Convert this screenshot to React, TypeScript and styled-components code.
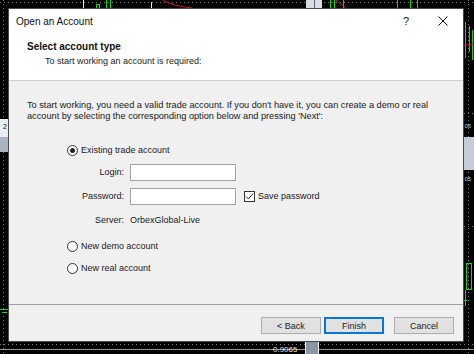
import { FC } from "react";
import styled, { createGlobalStyle } from "styled-components";

const GlobalStyle = createGlobalStyle`
  html, body {
    margin: 0;
    padding: 0;
    background: #000;
  }
  body {
    font-family: "Liberation Sans", Arial, sans-serif;
  }
`;

const ChartBackdrop: FC = () => (
  <ChartSvg width={474} height={354} viewBox="0 0 474 354">
    <rect width="474" height="354" fill="#000" />
    <g stroke="#808080" strokeWidth="1" strokeDasharray="1 3">
      <line x1="3.5" y1="0" x2="3.5" y2="354" />
      <line x1="468.5" y1="0" x2="468.5" y2="354" />
      <line x1="0" y1="2.5" x2="474" y2="2.5" />
      <line x1="0" y1="344.5" x2="474" y2="344.5" />
      <line x1="464" y1="113.5" x2="474" y2="113.5" />
      <line x1="464" y1="226.5" x2="474" y2="226.5" />
    </g>
    <line x1="0" y1="349.5" x2="474" y2="349.5" stroke="#9a9a9a" />

    {/* candles along the top edge */}
    <g stroke="#19d419" strokeWidth="1" fill="none">
      <line x1="106.5" y1="0" x2="106.5" y2="8" />
      <line x1="110.5" y1="0" x2="110.5" y2="8" />
      <rect x="96.5" y="4.5" width="3" height="4" />
      <line x1="330.5" y1="0" x2="330.5" y2="8" />
      <line x1="334.5" y1="0" x2="334.5" y2="8" />
      <line x1="343.5" y1="0" x2="343.5" y2="8" />
      <line x1="397.5" y1="0" x2="397.5" y2="8" />
      <line x1="410.5" y1="0" x2="410.5" y2="8" />
      <line x1="417.5" y1="0" x2="417.5" y2="8" />
    </g>
    <g stroke="#e8e8e8" strokeWidth="1">
      <line x1="83.5" y1="0" x2="83.5" y2="8" />
      <line x1="151.5" y1="2" x2="151.5" y2="8" />
    </g>
    <rect x="306" y="0" width="16" height="8" fill="#d9dee6" />
    <line x1="314.5" y1="0" x2="314.5" y2="8" stroke="#5a6270" />
    <path d="M163 0 Q172 6 192 8" stroke="#d01818" fill="none" />
    <path d="M336 0 Q340 4 346 8" stroke="#d01818" fill="none" />

    {/* right edge */}
    <g stroke="#19d419" strokeWidth="1" fill="none">
      <line x1="465.5" y1="22" x2="465.5" y2="58" />
      <line x1="469.5" y1="26" x2="469.5" y2="52" />
      <line x1="472.5" y1="30" x2="472.5" y2="60" />
      <rect x="466.5" y="263.5" width="5" height="26" />
      <line x1="464" y1="300.5" x2="467" y2="300.5" />
      <line x1="465.5" y1="290" x2="465.5" y2="306" />
    </g>
    <line x1="464" y1="45.5" x2="474" y2="44" stroke="#d01818" />
    <text x="464.5" y="128" fill="#d0d0d0" fontSize="6" fontFamily="Liberation Sans, Arial, sans-serif">
      06
    </text>
    <rect x="464" y="137" width="10" height="33" fill="#c3ccd8" />
    <text x="464.5" y="181" fill="#d0d0d0" fontSize="6" fontFamily="Liberation Sans, Arial, sans-serif">
      05
    </text>

    {/* left edge */}
    <rect x="0" y="119" width="8" height="18" fill="#e9edf2" />
    <text x="3" y="129" fill="#111" fontSize="7" fontFamily="Liberation Sans, Arial, sans-serif">
      2
    </text>
    <rect x="0" y="137" width="8" height="15" fill="#a9b4c2" />
    <g stroke="#19d419">
      <line x1="0" y1="309.5" x2="8" y2="309.5" />
      <line x1="2" y1="312.5" x2="7" y2="312.5" />
    </g>

    {/* bottom edge */}
    <text x="273" y="352" fill="#e0e0e0" fontSize="8" fontFamily="Liberation Sans, Arial, sans-serif">
      0.9065
    </text>
    <rect x="306" y="342" width="13" height="12" fill="#8d96a4" />
    <line x1="305.5" y1="342" x2="305.5" y2="354" stroke="#f0f0f0" />
    <line x1="318.5" y1="342" x2="318.5" y2="354" stroke="#f0f0f0" />
  </ChartSvg>
);

interface RadioOptionProps {
  label: string;
  checked?: boolean;
  spacing: number;
}

const RadioOption: FC<RadioOptionProps> = ({ label, checked, spacing }) => (
  <RadioRow $spacing={spacing}>
    <RadioCircle>{checked && <RadioDot />}</RadioCircle>
    <OptionText>{label}</OptionText>
  </RadioRow>
);

const App: FC = () => (
  <>
    <GlobalStyle />
    <Desktop>
      <ChartBackdrop />
      <Dialog>
        <Header>
          <TitleBar>
            <TitleText>Open an Account</TitleText>
            <HelpButton>?</HelpButton>
            <CloseButton>
              <svg width="10" height="10" viewBox="0 0 10 10">
                <path d="M0.5 0.5 L9.5 9.5 M9.5 0.5 L0.5 9.5" stroke="#111" strokeWidth="1" />
              </svg>
            </CloseButton>
          </TitleBar>
          <Heading>Select account type</Heading>
          <SubHeading>To start working an account is required:</SubHeading>
        </Header>

        <Body>
          <Intro>
            To start working, you need a valid trade account. If you don't have it, you can create a demo or real
            <br />
            account by selecting the corresponding option below and pressing 'Next':
          </Intro>

          <RadioOption label="Existing trade account" checked spacing={22} />

          <FormGrid>
            <FieldLabel>Login:</FieldLabel>
            <TextBox />
            <span />
            <FieldLabel>Password:</FieldLabel>
            <TextBox type="password" />
            <CheckRow>
              <CheckBox>
                <svg width="9" height="9" viewBox="0 0 9 9">
                  <path d="M1 4.5 L3.5 7 L8 1.5" stroke="#222" strokeWidth="1" fill="none" />
                </svg>
              </CheckBox>
              <OptionText>Save password</OptionText>
            </CheckRow>
            <FieldLabel>Server:</FieldLabel>
            <FieldValue>OrbexGlobal-Live</FieldValue>
            <span />
          </FormGrid>

          <RadioOption label="New demo account" spacing={11} />
          <RadioOption label="New real account" spacing={9} />
        </Body>

        <Footer>
          <WizardButton>&lt; Back</WizardButton>
          <WizardButton $primary>Finish</WizardButton>
          <WizardButton>Cancel</WizardButton>
        </Footer>
      </Dialog>
    </Desktop>
  </>
);

export default App;

const Desktop = styled.div`
  position: relative;
  width: 474px;
  height: 354px;
  overflow: hidden;
  background: #000;
`;

const ChartSvg = styled.svg`
  position: absolute;
  inset: 0;
  display: block;
`;

const Dialog = styled.div`
  position: absolute;
  left: 8px;
  top: 8px;
  width: 456px;
  height: 334px;
  box-sizing: border-box;
  border: 1px solid #4a4a4a;
  background: #f0f0f0;
  display: flex;
  flex-direction: column;
  color: #1a1a1a;
`;

const Header = styled.div`
  height: 72px;
  box-sizing: border-box;
  background: #fff;
  border-bottom: 1px solid #cfcfcf;
  display: flex;
  flex-direction: column;
`;

const TitleBar = styled.div`
  height: 24px;
  display: flex;
  align-items: center;
  gap: 12px;
  padding: 0 5px 0 7px;
`;

const TitleText = styled.div`
  flex: 1;
  font-size: 10px;
  color: #111;
`;

const HelpButton = styled.div`
  width: 20px;
  text-align: center;
  font-size: 11px;
  color: #222;
`;

const CloseButton = styled.div`
  width: 30px;
  display: flex;
  justify-content: center;
  align-items: center;
`;

const Heading = styled.div`
  margin: 8px 0 0 18px;
  font-size: 10px;
  line-height: 12px;
  font-weight: bold;
  color: #111;
`;

const SubHeading = styled.div`
  margin: 3px 0 0 36px;
  font-size: 9px;
  line-height: 11px;
`;

const Body = styled.div`
  flex: 1;
  padding: 19px 0 0 18px;
  display: flex;
  flex-direction: column;
  font-size: 9px;
  line-height: 11px;
`;

const Intro = styled.div`
  white-space: nowrap;
  font-size: 9.2px;
`;

const RadioRow = styled.div<{ $spacing: number }>`
  margin: ${({ $spacing }) => $spacing}px 0 0 40px;
  height: 13px;
  display: flex;
  align-items: center;
  gap: 3px;
`;

const RadioCircle = styled.span`
  width: 11px;
  height: 11px;
  box-sizing: border-box;
  border: 1px solid #333;
  border-radius: 50%;
  background: #fff;
  display: flex;
  align-items: center;
  justify-content: center;
`;

const RadioDot = styled.span`
  width: 5px;
  height: 5px;
  border-radius: 50%;
  background: #222;
`;

const OptionText = styled.span`
  font-size: 9px;
  line-height: 11px;
`;

const FormGrid = styled.div`
  margin-top: 7px;
  display: grid;
  grid-template-columns: 97px 106px auto;
  grid-auto-rows: 17px;
  row-gap: 7px;
  column-gap: 6px;
  align-items: center;
`;

const FieldLabel = styled.span`
  text-align: right;
`;

const FieldValue = styled.span``;

const TextBox = styled.input`
  width: 106px;
  height: 17px;
  box-sizing: border-box;
  border: 1px solid #a3a3a3;
  background: #fff;
  margin: 0;
  padding: 0 3px;
  font: inherit;
  outline: none;
`;

const CheckRow = styled.div`
  margin-left: 2px;
  display: flex;
  align-items: center;
  gap: 3px;
`;

const CheckBox = styled.span`
  width: 11px;
  height: 11px;
  box-sizing: border-box;
  border: 1px solid #333;
  background: #fff;
  display: flex;
  align-items: center;
  justify-content: center;
`;

const Footer = styled.div`
  border-top: 1px solid #a0a0a0;
  padding: 12px 9px 7px 0;
  display: flex;
  justify-content: flex-end;
  gap: 3px;
`;

const WizardButton = styled.button<{ $primary?: boolean }>`
  width: 60px;
  height: 17px;
  box-sizing: border-box;
  margin: 0;
  padding: 0;
  font-family: "Liberation Sans", Arial, sans-serif;
  font-size: 9px;
  color: #1a1a1a;
  background: #e1e1e1;
  border: 1px solid ${({ $primary }) => ($primary ? "#0078d7" : "#adadad")};
  box-shadow: ${({ $primary }) => ($primary ? "inset 0 0 0 1px #0078d7" : "none")};
  margin-right: ${({ $primary }) => ($primary ? "7px" : "0")};
`;
